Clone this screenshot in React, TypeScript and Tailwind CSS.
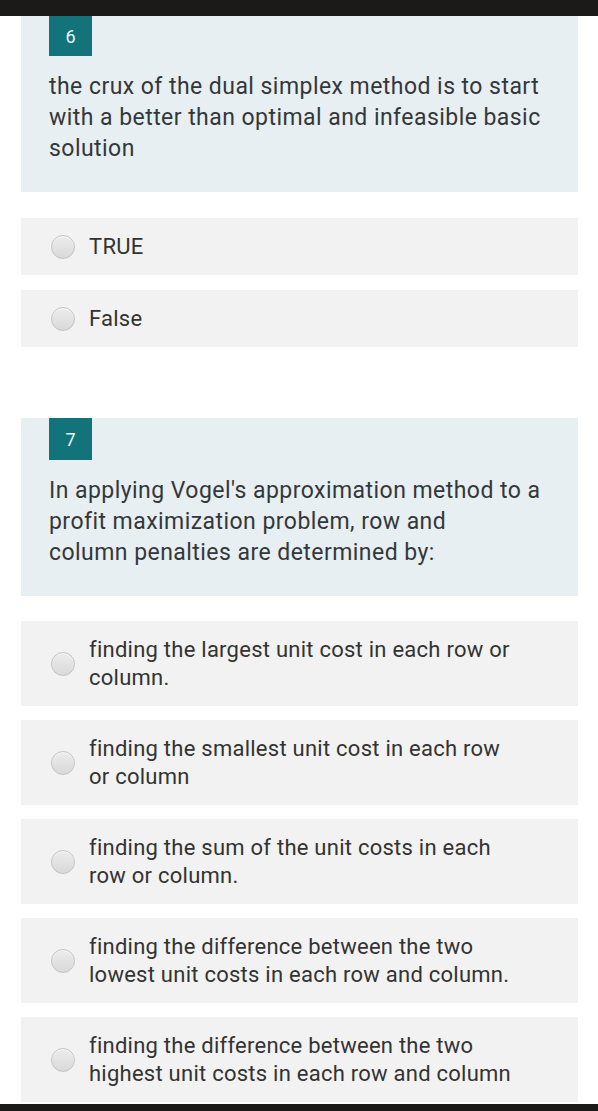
import React from 'react';

const questions = [
  {
    num: '6',
    lines: [
      'the crux of the dual simplex method is to start',
      'with a better than optimal and infeasible basic',
      'solution',
    ],
    badge: 'h-[40px]',
    top: 'mt-[26px] gap-[15px]',
    options: [['TRUE'], ['False']],
  },
  {
    num: '7',
    lines: [
      'In applying Vogel\'s approximation method to a',
      'profit maximization problem, row and',
      'column penalties are determined by:',
    ],
    badge: 'h-[42px]',
    top: 'mt-[25px] gap-[14px]',
    options: [
      ['finding the largest unit cost in each row or', 'column.'],
      ['finding the smallest unit cost in each row', 'or column'],
      ['finding the sum of the unit costs in each', 'row or column.'],
      ['finding the difference between the two', 'lowest unit costs in each row and column.'],
      ['finding the difference between the two', 'highest unit costs in each row and column'],
    ],
  },
];

function Radio() {
  return (
    <span className="shrink-0 w-[24px] h-[24px] rounded-full border border-[#c4c4c4] bg-gradient-to-b from-[#ececec] to-[#d9d9d9] shadow-[inset_0_1px_1px_rgba(255,255,255,0.7)]" />
  );
}

export default function App() {
  return (
    <div
      className="w-[598px] h-[1111px] bg-white flex flex-col overflow-hidden"
      style={{ fontFamily: 'Roboto, "Liberation Sans", sans-serif' }}
    >
      <div className="h-[16px] shrink-0 bg-[#1c1a19]" />

      <div className="flex-1 flex flex-col px-[21px] pr-[20px]">
        {questions.map((q, qi) => (
          <div key={q.num} className={qi === 0 ? '' : 'mt-[71px]'}>
            <div className="bg-[#e7eff2] px-[28px] pb-[28px]">
              <div
                className={`w-[43px] ${q.badge} bg-[#13737a] text-[#e6f6f7] text-[18px] flex items-center justify-center`}
              >
                {q.num}
              </div>
              <div className="mt-[15px] text-[23px] leading-[31px] tracking-[0.45px] text-[#34373a] whitespace-nowrap">
                {q.lines.map((l, i) => (
                  <div key={i}>{l}</div>
                ))}
              </div>
            </div>

            <div className={`${q.top} flex flex-col`}>
              {q.options.map((opt, oi) => (
                <div
                  key={oi}
                  className="bg-[#f2f2f2] flex items-center pl-[30px] py-[14.5px]"
                >
                  <Radio />
                  <div className="ml-[14px] text-[22px] leading-[28px] tracking-[0.25px] text-[#333333] whitespace-nowrap">
                    {opt.map((l, i) => (
                      <div key={i}>{l}</div>
                    ))}
                  </div>
                </div>
              ))}
            </div>
          </div>
        ))}
      </div>

      <div className="h-[7px] shrink-0 bg-[#1c1a19]" />
    </div>
  );
}
